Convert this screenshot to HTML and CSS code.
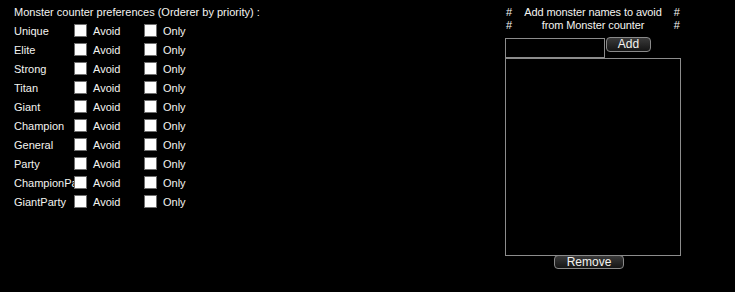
FILE: index.html
```html
<!DOCTYPE html>
<html lang="en">

<head>
    <meta charset="UTF-8">
    <title>Monster counter</title>
    <link rel="stylesheet" href="styles.css">
</head>

<body>
    <div class=page>
        <div class=prefs>
            <p class=title>Monster counter preferences (Orderer by priority) :</p>
            <div class=row><span class=name>Unique</span><label class=opt><input type=checkbox>Avoid</label><label class=opt><input type=checkbox>Only</label></div>
            <div class=row><span class=name>Elite</span><label class=opt><input type=checkbox>Avoid</label><label class=opt><input type=checkbox>Only</label></div>
            <div class=row><span class=name>Strong</span><label class=opt><input type=checkbox>Avoid</label><label class=opt><input type=checkbox>Only</label></div>
            <div class=row><span class=name>Titan</span><label class=opt><input type=checkbox>Avoid</label><label class=opt><input type=checkbox>Only</label></div>
            <div class=row><span class=name>Giant</span><label class=opt><input type=checkbox>Avoid</label><label class=opt><input type=checkbox>Only</label></div>
            <div class=row><span class=name>Champion</span><label class=opt><input type=checkbox>Avoid</label><label class=opt><input type=checkbox>Only</label></div>
            <div class=row><span class=name>General</span><label class=opt><input type=checkbox>Avoid</label><label class=opt><input type=checkbox>Only</label></div>
            <div class=row><span class=name>Party</span><label class=opt><input type=checkbox>Avoid</label><label class=opt><input type=checkbox>Only</label></div>
            <div class=row><span class=name>ChampionParty</span><label class=opt><input type=checkbox>Avoid</label><label class=opt><input type=checkbox>Only</label></div>
            <div class=row><span class=name>GiantParty</span><label class=opt><input type=checkbox>Avoid</label><label class=opt><input type=checkbox>Only</label></div>
        </div>
        <div class=avoid>
            <div class=head><span>#</span><span class=text>Add monster names to avoid</span><span>#</span></div>
            <div class=head><span>#</span><span class=text>from Monster counter</span><span>#</span></div>
            <div class=add>
                <input type=text class=field>
                <button class=btn>Add</button>
            </div>
            <div class=list></div>
            <div class=bottom>
                <button class="btn remove">Remove</button>
            </div>
        </div>
    </div>
</body>

</html>
```

FILE: styles.css
```css
* {
    margin: 0;
    padding: 0;
    border: 0;
    box-sizing: border-box;
}

body {
    background-color: black;
    color: #f4f4f0;
    font-family: "Liberation Sans", Arial, sans-serif;
    font-size: 11px;
    height: 292px;
}

.page {
    display: flex;
    padding-top: 6px;
}

.prefs {
    width: 505px;
    padding-left: 14px;
}

.title {
    line-height: 13px;
    height: 15px;
}

.row {
    display: flex;
    align-items: center;
    height: 19px;
}

.name {
    width: 60px;
    overflow: hidden;
    white-space: nowrap;
}

.opt {
    display: flex;
    align-items: center;
    width: 70px;
}

.opt input {
    appearance: none;
    width: 13px;
    height: 13px;
    background-color: white;
    border: 1px solid #6e6e6e;
    margin-right: 6px;
}

.avoid {
    width: 176px;
}

.head {
    display: flex;
    justify-content: space-between;
    line-height: 12px;
    padding: 0 1px;
}

.head + .head {
    margin-top: 1px;
}

.head .text {
    letter-spacing: -0.1px;
}

.add {
    display: flex;
    align-items: flex-start;
    margin-top: 6px;
}

.field {
    width: 100px;
    height: 20px;
    margin-top: 1px;
    margin-right: 1px;
    background-color: black;
    border: 1px solid #8c8c8c;
}

.btn {
    font-family: inherit;
    font-size: 12px;
    color: #f4f4f0;
    background: linear-gradient(#3a3a3a, #151515);
    border: 1px solid #8a8a8a;
    border-radius: 4px;
    height: 15px;
    line-height: 13px;
}

.add .btn {
    width: 45px;
}

.list {
    height: 198px;
    border: 1px solid #8c8c8c;
}

.bottom {
    display: flex;
    justify-content: center;
    padding-right: 8px;
}

.remove {
    width: 70px;
    height: 14px;
    line-height: 12px;
    margin-top: -1px;
}
```
